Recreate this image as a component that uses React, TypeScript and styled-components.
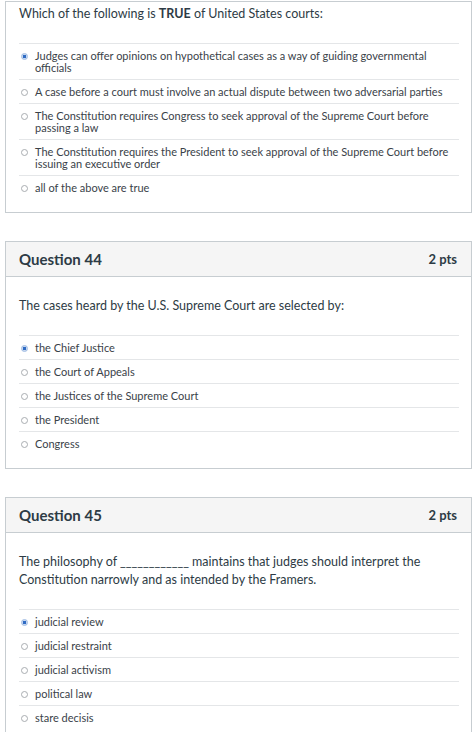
import React from "react";
import styled, { createGlobalStyle } from "styled-components";

const GlobalStyle = createGlobalStyle`
  html, body {
    margin: 0;
    padding: 0;
    background: #ffffff;
  }
  body {
    font-family: Lato, "Noto Sans", "Liberation Sans", sans-serif;
    color: #2d3b45;
  }
`;

const Page = styled.div`
  display: flex;
  flex-direction: column;
  gap: 28px;
  padding: 1px 2px 0 5px;
`;

const Card = styled.div`
  border: 1px solid #c7cdd1;
  background: #ffffff;
`;

const Header = styled.div`
  display: flex;
  align-items: center;
  justify-content: space-between;
  height: 34px;
  padding: 0 14px 0 13px;
  background: #f5f5f5;
  border-bottom: 1px solid #c7cdd1;
`;

const Title = styled.h2`
  margin: 0;
  font-size: 15px;
  font-weight: 700;
  color: #2d3b45;
`;

const Points = styled.span`
  font-size: 13px;
  font-weight: 700;
  color: #2d3b45;
`;

const Body = styled.div<{ $continued?: boolean }>`
  padding: ${(p) => (p.$continued ? "3px" : "20px")} 12px 13px 13px;
`;

const Prompt = styled.div`
  font-size: 12.5px;
  line-height: 18px;
  color: #2d3b45;
  b {
    font-weight: 700;
  }
`;

const Answers = styled.ul`
  list-style: none;
  margin: 20px 0 0;
  padding: 0;
`;

const Answer = styled.li`
  display: flex;
  align-items: flex-start;
  gap: 7px;
  padding: 5.5px 0;
  border-top: 1px solid #e4e6e8;
  font-size: 11px;
  line-height: 12px;
  color: #3a4249;
`;

const Radio = styled.span<{ $checked?: boolean }>`
  flex: none;
  width: 7px;
  height: 7px;
  margin: 3px 0 0 2px;
  border-radius: 50%;
  box-sizing: border-box;
  border: 1px solid ${(p) => (p.$checked ? "#9fbbe3" : "#a9adb1")};
  background: ${(p) =>
    p.$checked ? "radial-gradient(circle, #2f6bc4 0 45%, #c9d9f0 55%)" : "#fff"};
`;

type Question = {
  title?: string;
  prompt: React.ReactNode;
  answers: string[];
  selected: number;
};

const questions: Question[] = [
  {
    prompt: (
      <>
        Which of the following is <b>TRUE</b> of United States courts:
      </>
    ),
    answers: [
      "Judges can offer opinions on hypothetical cases as a way of guiding governmental officials",
      "A case before a court must involve an actual dispute between two adversarial parties",
      "The Constitution requires Congress to seek approval of the Supreme Court before passing a law",
      "The Constitution requires the President to seek approval of the Supreme Court before issuing an executive order",
      "all of the above are true",
    ],
    selected: 0,
  },
  {
    title: "Question 44",
    prompt: "The cases heard by the U.S. Supreme Court are selected by:",
    answers: [
      "the Chief Justice",
      "the Court of Appeals",
      "the Justices of the Supreme Court",
      "the President",
      "Congress",
    ],
    selected: 0,
  },
  {
    title: "Question 45",
    prompt:
      "The philosophy of ____________ maintains that judges should interpret the Constitution narrowly and as intended by the Framers.",
    answers: [
      "judicial review",
      "judicial restraint",
      "judicial activism",
      "political law",
      "stare decisis",
    ],
    selected: 0,
  },
];

export default function App() {
  return (
    <>
      <GlobalStyle />
      <Page>
        {questions.map((q, i) => (
          <Card key={i}>
            {q.title && (
              <Header>
                <Title>{q.title}</Title>
                <Points>2 pts</Points>
              </Header>
            )}
            <Body $continued={!q.title}>
              <Prompt>{q.prompt}</Prompt>
              <Answers>
                {q.answers.map((a, j) => (
                  <Answer key={j}>
                    <Radio $checked={j === q.selected} />
                    <span>{a}</span>
                  </Answer>
                ))}
              </Answers>
            </Body>
          </Card>
        ))}
      </Page>
    </>
  );
}
